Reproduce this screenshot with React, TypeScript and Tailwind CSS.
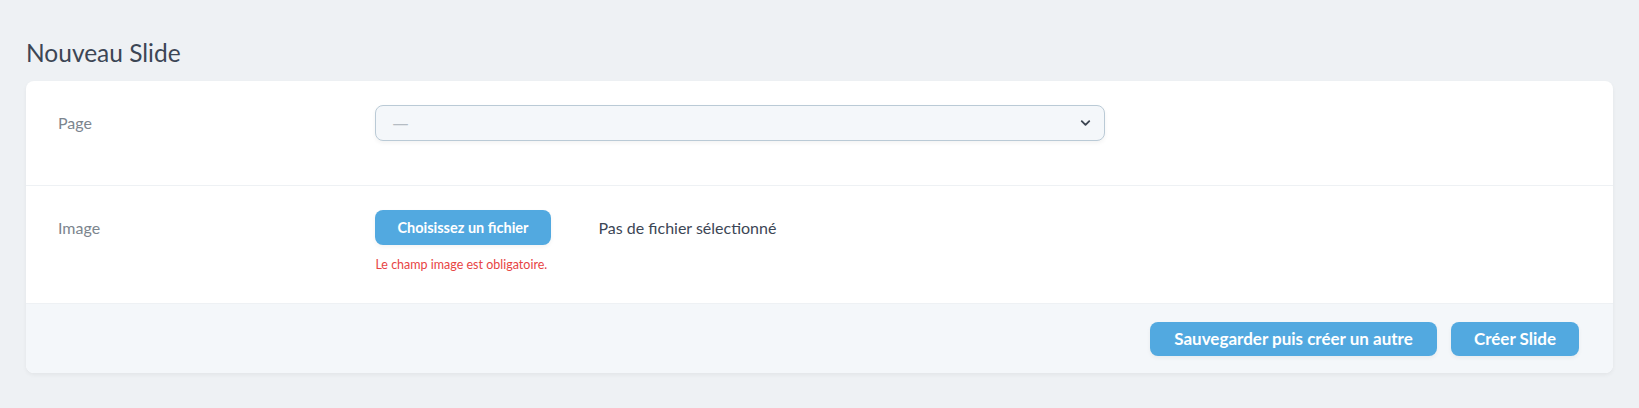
import { ChevronDown } from 'lucide-react'

function FieldRow({ label, children, className }: { label: string; children: React.ReactNode; className?: string }) {
  return (
    <div className={`flex border-b border-[#eef1f4] ${className ?? ''}`}>
      <div className="w-1/5 px-8 pt-[30px]">
        <span className="text-base text-[#7c858e]">{label}</span>
      </div>
      <div className="w-1/2 px-8 pt-6">{children}</div>
    </div>
  )
}

function App() {
  return (
    <div className="min-h-[408px] bg-[#eef1f4] px-[26px] pt-[38px] font-['Lato',sans-serif] text-[#3c4655]">
      <h1 className="mb-[13px] text-[24.5px] font-normal leading-[30px] text-[#3c4655]">Nouveau Slide</h1>

      <div className="overflow-hidden rounded-lg bg-white shadow-[0_2px_4px_0_rgba(0,0,0,0.05)]">
        <FieldRow label="Page" className="h-[105px]">
          <div className="relative">
            <select className="h-9 w-full appearance-none rounded-lg border border-[#bacad6] bg-[#f4f7fa] pl-4 pr-10 font-['Noto_Sans',sans-serif] text-base text-[#b5bcc3] shadow-[0_2px_4px_0_rgba(0,0,0,0.05)] outline-none">
              <option>—</option>
            </select>
            <ChevronDown className="pointer-events-none absolute top-1/2 right-[12px] h-[15px] w-[15px] -translate-y-1/2 text-[#3d4652]" strokeWidth={3} />
          </div>
        </FieldRow>

        <FieldRow label="Image" className="h-[118px]">
          <div className="flex items-center">
            <button className="h-[35px] rounded-lg bg-[#52a9e0] px-[22px] text-[14.5px] font-bold text-white shadow-[0_2px_4px_0_rgba(0,0,0,0.05)]">
              Choisissez un fichier
            </button>
            <span className="ml-[48px] text-base text-[#3c4655]">Pas de fichier sélectionné</span>
          </div>
          <p className="mt-[11px] text-[12.5px] text-[#e74444]">Le champ image est obligatoire.</p>
        </FieldRow>

        <div className="flex items-center justify-end bg-[#f4f7fa] pt-[18px] pr-[34px] pb-[17px] pl-8">
          <button className="mr-[14px] h-[34px] w-[287px] rounded-lg bg-[#52a9e0] text-[17px] font-bold text-white shadow-[0_2px_4px_0_rgba(0,0,0,0.05)]">
            Sauvegarder puis créer un autre
          </button>
          <button className="h-[34px] w-[128px] rounded-lg bg-[#52a9e0] text-[17px] font-bold text-white shadow-[0_2px_4px_0_rgba(0,0,0,0.05)]">
            Créer Slide
          </button>
        </div>
      </div>
    </div>
  )
}

export default App
